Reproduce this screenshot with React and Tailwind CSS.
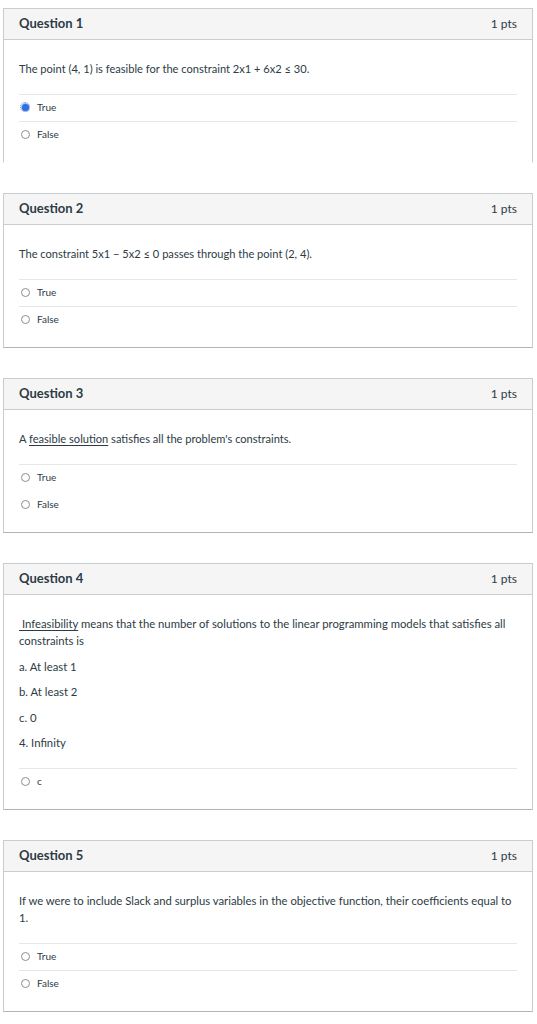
import React from 'react';

const QUESTIONS = [
  {
    n: 1,
    text: <>The point (4, 1) is feasible for the constraint 2x1 + 6x2 ≤ 30.</>,
    answers: ['True', 'False'],
    selected: 0,
    noBottom: true,
  },
  {
    n: 2,
    text: <>The constraint 5x1 − 5x2 ≤ 0 passes through the point (2, 4).</>,
    answers: ['True', 'False'],
  },
  {
    n: 3,
    text: (
      <>
        A <span className="underline underline-offset-2">feasible solution</span> satisfies all the problem's constraints.
      </>
    ),
    answers: ['True', 'False'],
    noDivider: true,
  },
  {
    n: 4,
    wide: true,
    text: (
      <>
        <span className="underline underline-offset-2">&nbsp;Infeasibility</span> means that the number of solutions to the linear programming models that satisfies all constraints is
      </>
    ),
    extra: ['a. At least 1', 'b. At least 2', 'c. 0', '4. Infinity'],
    answers: ['c'],
  },
  {
    n: 5,
    wide: true,
    text: <>If we were to include Slack and surplus variables in the objective function, their coefficients equal to 1.</>,
    answers: ['True', 'False'],
  },
];

function Radio({ checked }) {
  if (checked) {
    return (
      <span className="flex h-[10px] w-[10px] items-center justify-center rounded-full border border-dotted border-[#6a8fd8]">
        <span className="h-[7px] w-[7px] rounded-full bg-[#2f6fe0] ring-1 ring-[#9ab8ee]" />
      </span>
    );
  }
  return <span className="h-[9px] w-[9px] rounded-full border border-[#8a8f94] bg-white" />;
}

function Question({ q }) {
  return (
    <div
      className={`mb-[30px] border border-[#c7cdd1] bg-white ${
        q.noBottom ? 'border-b-transparent' : 'border-b-[#b4b4b4]'
      }`}
    >
      <div className="flex h-[31px] items-center justify-between border-b border-[#c7cdd1] bg-[#f5f5f5] px-[15px]">
        <span className="text-[13px] font-bold text-[#2d3b45]">Question {q.n}</span>
        <span className="text-[12px] text-[#2d3b45]">1 pts</span>
      </div>
      <div className="px-[15px] pt-[20px] pb-[14px]">
        <p className={`${q.wide ? 'text-[11.3px]' : 'text-[11.1px]'} leading-[17px] text-[#2d3b45]`}>{q.text}</p>
        {q.extra &&
          q.extra.map((e) => (
            <p key={e} className="mt-[8.5px] text-[11.3px] leading-[17px] text-[#2d3b45]">
              {e}
            </p>
          ))}
        <div className="mt-[17px]">
          {q.answers.map((a, i) => (
            <div
              key={a}
              className={`flex h-[27px] items-center gap-[7px] border-t pb-[2px] pl-[1px] ${
                i > 0 && q.noDivider ? 'border-transparent' : 'border-[#e4e6e8]'
              }`}
            >
              <span className="flex w-[10px] justify-center">
                <Radio checked={q.selected === i} />
              </span>
              <span className="text-[10px] text-[#2d3b45]">{a}</span>
            </div>
          ))}
        </div>
      </div>
    </div>
  );
}

export default function App() {
  return (
    <div
      className="min-h-[1024px] bg-white pl-[3px] pr-[4px] pt-[8px]"
      style={{ fontFamily: 'Lato, "Liberation Sans", sans-serif' }}
    >
      {QUESTIONS.map((q) => (
        <Question key={q.n} q={q} />
      ))}
    </div>
  );
}
